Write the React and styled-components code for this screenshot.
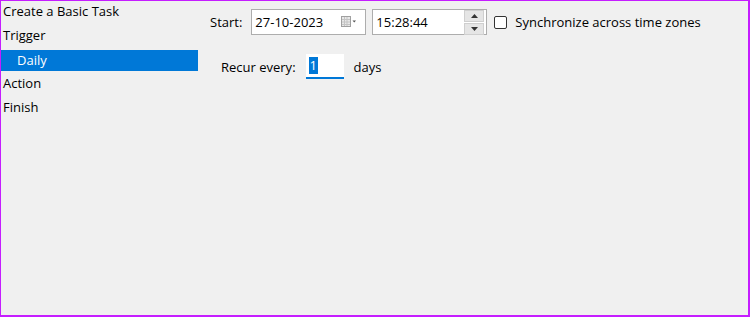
import React from "react";
import styled, { createGlobalStyle } from "styled-components";

const Global = createGlobalStyle`
  html, body { margin: 0; padding: 0; background: #f0f0f0; }
  body { font-family: "Open Sans", "Noto Sans", sans-serif; font-size: 13px; color: #000; }
`;

const Frame = styled.div`
  box-sizing: border-box;
  width: 750px;
  height: 317px;
  background: #f0f0f0;
  border-style: solid;
  border-color: #c51dff;
  border-width: 1px 2px 2px 1px;
  display: flex;
`;

const Sidebar = styled.div`
  width: 197px;
  display: flex;
  flex-direction: column;
`;

const NavItem = styled.div`
  height: ${(p) => (p.$selected ? "21px" : "24px")};
  margin: ${(p) => (p.$selected ? "1px 0 2px" : "0")};
  line-height: ${(p) => (p.$selected ? "20px" : "21px")};
  padding-left: ${(p) => (p.$indent ? "16px" : "2px")};
  background: ${(p) => (p.$selected ? "#0078d7" : "transparent")};
  color: ${(p) => (p.$selected ? "#fff" : "#000")};
  white-space: nowrap;
`;

const Content = styled.div`
  flex: 1;
  padding: 8px 0 0 12px;
  display: flex;
  flex-direction: column;
  gap: 19px;
`;

const Row = styled.div`
  display: flex;
  align-items: center;
  padding-left: ${(p) => p.$indent || 0}px;
`;

const Label = styled.span`
  margin-right: ${(p) => p.$gap || 8}px;
  white-space: nowrap;
`;

const Box = styled.div`
  box-sizing: border-box;
  width: 115px;
  height: 26px;
  background: #fff;
  border: 1px solid #adadad;
  display: flex;
  align-items: center;
  padding-left: 3px;
  margin-right: ${(p) => p.$mr || 0}px;
`;

const BoxText = styled.span`
  flex: 1;
`;

const Spinner = styled.div`
  display: flex;
  flex-direction: column;
  gap: 1px;
  margin-right: 2px;
`;

const SpinBtn = styled.div`
  width: 18px;
  height: 10px;
  background: #e5e5e5;
  border: 1px solid #cfcfcf;
  display: flex;
  align-items: center;
  justify-content: center;
`;

const Check = styled.span`
  box-sizing: border-box;
  width: 13px;
  height: 13px;
  border: 1px solid #333;
  border-radius: 2px;
  background: #fff;
  margin-right: 8px;
`;

const NumInput = styled.div`
  box-sizing: border-box;
  width: 38px;
  height: 25px;
  background: #fff;
  border-bottom: 2px solid #0078d7;
  display: flex;
  align-items: center;
  padding-left: 3px;
  margin-right: 10px;
`;

const Sel = styled.span`
  background: #0078d7;
  color: #fff;
  line-height: 17px;
  padding: 0 1px;
`;

const CalIcon = () => (
  <svg width="16" height="12" viewBox="0 0 16 12" style={{ marginRight: 8 }}>
    <rect x="0.5" y="0.5" width="9" height="10" fill="#e8e8e8" stroke="#a0a0a0" />
    <path d="M1 3.5H9M1 6H9M1 8.5H9M3.5 1V10M6 1V10" stroke="#c4c4c4" strokeWidth="1" />
    <path d="M11.5 4.5L15 4.5L13.25 6.5Z" fill="#555" />
  </svg>
);

const Tri = ({ up }) => (
  <svg width="7" height="4" viewBox="0 0 7 4">
    <path d={up ? "M0 4L3.5 0L7 4Z" : "M0 0L3.5 4L7 0Z"} fill="#333" />
  </svg>
);

export default function App() {
  return (
    <>
      <Global />
      <Frame>
        <Sidebar>
          <NavItem>Create a Basic Task</NavItem>
          <NavItem>Trigger</NavItem>
          <NavItem $selected $indent>Daily</NavItem>
          <NavItem>Action</NavItem>
          <NavItem>Finish</NavItem>
        </Sidebar>
        <Content>
          <Row>
            <Label $gap={9}>Start:</Label>
            <Box $mr={6}>
              <BoxText>27-10-2023</BoxText>
              <CalIcon />
            </Box>
            <Box $mr={7}>
              <BoxText>15:28:44</BoxText>
              <Spinner>
                <SpinBtn><Tri up /></SpinBtn>
                <SpinBtn><Tri /></SpinBtn>
              </Spinner>
            </Box>
            <Check />
            <Label>Synchronize across time zones</Label>
          </Row>
          <Row $indent={11}>
            <Label $gap={10}>Recur every:</Label>
            <NumInput><Sel>1</Sel></NumInput>
            <Label>days</Label>
          </Row>
        </Content>
      </Frame>
    </>
  );
}
